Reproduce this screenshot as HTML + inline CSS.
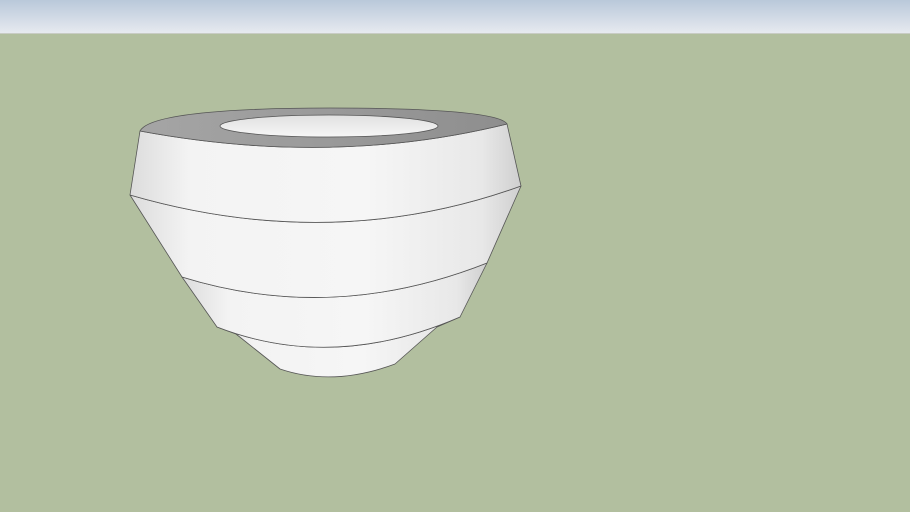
<!DOCTYPE html>
<html><head><style>html,body{margin:0;padding:0;width:910px;height:512px;overflow:hidden;background:#b2bf9f}</style></head>
<body>
<svg width="910" height="512" viewBox="0 0 910 512" xmlns="http://www.w3.org/2000/svg">
<defs>
<linearGradient id="sky" x1="0" y1="0" x2="0" y2="1"><stop offset="0" stop-color="#b9c8da"/><stop offset="1" stop-color="#e8ebf0"/></linearGradient>
<linearGradient id="side" x1="0" y1="0" x2="1" y2="0"><stop offset="0" stop-color="#dcdcdc"/><stop offset="0.15" stop-color="#f3f3f3"/><stop offset="0.6" stop-color="#f6f6f6"/><stop offset="0.9" stop-color="#e8e8e8"/><stop offset="1" stop-color="#cfcfcf"/></linearGradient>
<linearGradient id="top" x1="0" y1="0" x2="1" y2="0"><stop offset="0" stop-color="#a5a5a5"/><stop offset="0.5" stop-color="#9a9a9a"/><stop offset="1" stop-color="#8e8e8e"/></linearGradient>
<linearGradient id="hole" x1="0" y1="0" x2="0" y2="1"><stop offset="0" stop-color="#e0e0e0"/><stop offset="1" stop-color="#f6f6f6"/></linearGradient>
</defs>
<rect x="0" y="0" width="910" height="34" fill="url(#sky)"/>
<rect x="0" y="33" width="910" height="1" fill="#c8ccc4"/>
<rect x="0" y="34" width="910" height="478" fill="#b2bf9f"/>
<g stroke="#555" stroke-width="0.8" stroke-linejoin="round">
<path d="M217,327 L236,334 L280,369 Q333,387 395,364 L437,327 L460,317 Q333,372 217,327 Z" fill="url(#side)"/>
<path d="M182,277 L217,327 Q333,372 460,317 L487,263 Q333,324 182,277 Z" fill="url(#side)"/>
<path d="M130,195 L182,277 Q333,324 487,263 L521,186 Q333,254 130,195 Z" fill="url(#side)"/>
<path d="M140,131 L130,195 Q333,254 521,186 L507,124 Q333,167 140,131 Z" fill="url(#side)"/>
<path d="M140,131 C150,112 250,108 330,108 C420,108 500,112 507,124 Q333,167 140,131 Z" fill="url(#top)"/>
<ellipse cx="329" cy="126" rx="109" ry="11" fill="url(#hole)"/>
</g>
</svg>
</body></html>
